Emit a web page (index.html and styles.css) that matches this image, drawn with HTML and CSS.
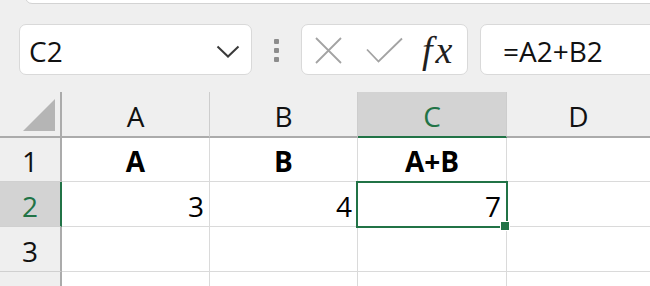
FILE: index.html
```html
<!DOCTYPE html>
<html lang="en">
<head>
<meta charset="utf-8">
<title>Sheet</title>
<link rel="stylesheet" href="styles.css">
</head>
<body>
<div class="app">
  <div class="ribbon"></div>
  <div class="formula-bar">
    <div class="namebox">
      <span class="name">C2</span>
      <svg class="chevron" width="24" height="13" viewBox="0 0 24 13"><polyline points="1.5,1.5 12,11.5 22.5,1.5" fill="none" stroke="#3a3a3a" stroke-width="2"/></svg>
    </div>
    <div class="grip"><i></i><i></i><i></i></div>
    <div class="fx-buttons">
      <svg class="icon-x" width="27" height="27" viewBox="0 0 27 27"><path d="M1 1 L26 26 M26 1 L1 26" fill="none" stroke="#a3a3a3" stroke-width="1.8"/></svg>
      <svg class="icon-check" width="37" height="26" viewBox="0 0 37 26"><polyline points="1,12.5 12.5,24.5 36,1.5" fill="none" stroke="#a3a3a3" stroke-width="1.8"/></svg>
      <span class="fx">fx</span>
    </div>
    <div class="formula">=A2+B2</div>
  </div>
  <div class="sheet">
    <div class="corner"><svg width="32" height="32" viewBox="0 0 32 32"><polygon points="32,0 32,32 0,32" fill="#b5b5b5"/></svg></div>
    <div class="ch">A</div>
    <div class="ch">B</div>
    <div class="ch ch-sel">C</div>
    <div class="ch last">D</div>

    <div class="rh">1</div>
    <div class="cell bold">A</div>
    <div class="cell bold">B</div>
    <div class="cell bold">A+B</div>
    <div class="cell last"></div>

    <div class="rh rh-sel">2</div>
    <div class="cell num">3</div>
    <div class="cell num">4</div>
    <div class="cell num active">7<span class="sel"></span><span class="handle"></span></div>
    <div class="cell last"></div>

    <div class="rh">3</div>
    <div class="cell"></div>
    <div class="cell"></div>
    <div class="cell"></div>
    <div class="cell last"></div>

    <div class="rh">4</div>
    <div class="cell"></div>
    <div class="cell"></div>
    <div class="cell"></div>
    <div class="cell last"></div>
  </div>
</div>
</body>
</html>
```
FILE: styles.css
```css
* { box-sizing: border-box; }

html, body {
  margin: 0;
  padding: 0;
  background: #efefef;
}

body {
  font-family: "Open Sans", "Liberation Sans", sans-serif;
  color: #000;
}

.app {
  width: 650px;
  height: 286px;
  overflow: hidden;
  display: flex;
  flex-direction: column;
}

.ribbon {
  flex: none;
  height: 15px;
  margin: -11px -20px 0 25px;
  background: #fff;
  border: 1px solid #d3d3d3;
  border-radius: 7px;
}

.formula-bar {
  flex: none;
  display: flex;
  align-items: center;
  height: 51px;
  margin-top: 20px;
  padding-left: 19px;
}

.namebox {
  flex: none;
  width: 233px;
  height: 51px;
  background: #fff;
  border: 1px solid #d9d9d9;
  border-radius: 7px;
  display: flex;
  align-items: center;
  justify-content: space-between;
  padding: 3px 11px 0 9px;
}

.name, .formula {
  font-size: 28px;
  line-height: 28px;
  color: #111;
}

.chevron { display: block; }

.grip {
  flex: none;
  width: 5px;
  margin: 0 22px 0 22px;
  display: flex;
  flex-direction: column;
  gap: 4.5px;
  padding-top: 2px;
}

.grip i {
  display: block;
  width: 5px;
  height: 4.5px;
  border-radius: 1px;
  background: #8c8c8c;
}

.fx-buttons {
  flex: none;
  width: 167px;
  height: 51px;
  background: #fff;
  border: 1px solid #d9d9d9;
  border-radius: 7px;
  display: flex;
  align-items: center;
  padding-left: 13px;
}

.icon-x { display: block; margin-top: 1px; }
.icon-check { display: block; margin-left: 24px; margin-top: 0px; }

.fx {
  margin-left: 19px;
  font-family: "Liberation Serif", "DejaVu Serif", serif;
  font-style: italic;
  font-size: 38px;
  line-height: 38px;
  letter-spacing: 3px;
  color: #1f1f1f;
}

.formula {
  flex: 1;
  height: 51px;
  margin-left: 12px;
  margin-right: -20px;
  background: #fff;
  border: 1px solid #d9d9d9;
  border-radius: 7px;
  display: flex;
  align-items: center;
  padding: 3px 0 0 22px;
}

.sheet {
  flex: none;
  margin-top: 17px;
  display: grid;
  grid-template-columns: 62px 148px 148px 149px 1fr;
  grid-template-rows: 46px 44px 45px 45px 45px;
  font-size: 28px;
  line-height: 28px;
}

.corner {
  background: #efefef;
  border-right: 2px solid #ababab;
  border-bottom: 2px solid #ababab;
  display: flex;
  justify-content: flex-end;
  align-items: flex-end;
  padding: 0 5px 5px 0;
}

.corner svg { display: block; }

.ch {
  background: #efefef;
  border-right: 1px solid #cdcdcd;
  border-bottom: 2px solid #ababab;
  display: flex;
  justify-content: center;
  align-items: flex-end;
  padding-bottom: 6px;
  color: #111;
}

.ch.last { border-right: none; }

.ch-sel {
  background: #d3d3d3;
  color: #217346;
  border-bottom-color: #217346;
}

.rh {
  background: #efefef;
  border-right: 2px solid #ababab;
  border-bottom: 1px solid #d0d0d0;
  display: flex;
  justify-content: center;
  align-items: flex-end;
  padding-bottom: 6px;
  color: #111;
}

.rh-sel {
  background: #d3d3d3;
  color: #217346;
  border-right-color: #217346;
}

.cell {
  background: #fff;
  border-right: 1px solid #dadada;
  border-bottom: 1px solid #dadada;
  display: flex;
  align-items: flex-end;
  padding: 0 5px 6px 5px;
}

.cell.last { border-right: none; }

.bold {
  font-weight: 700;
  justify-content: center;
}

.num { justify-content: flex-end; }

.active { position: relative; }

.sel {
  position: absolute;
  left: -2px;
  top: -1px;
  right: -2px;
  bottom: -2px;
  border: 2px solid #217346;
}

.handle {
  position: absolute;
  right: -4px;
  bottom: -5px;
  width: 10px;
  height: 10px;
  background: #217346;
  border: 1px solid #fff;
}
```
